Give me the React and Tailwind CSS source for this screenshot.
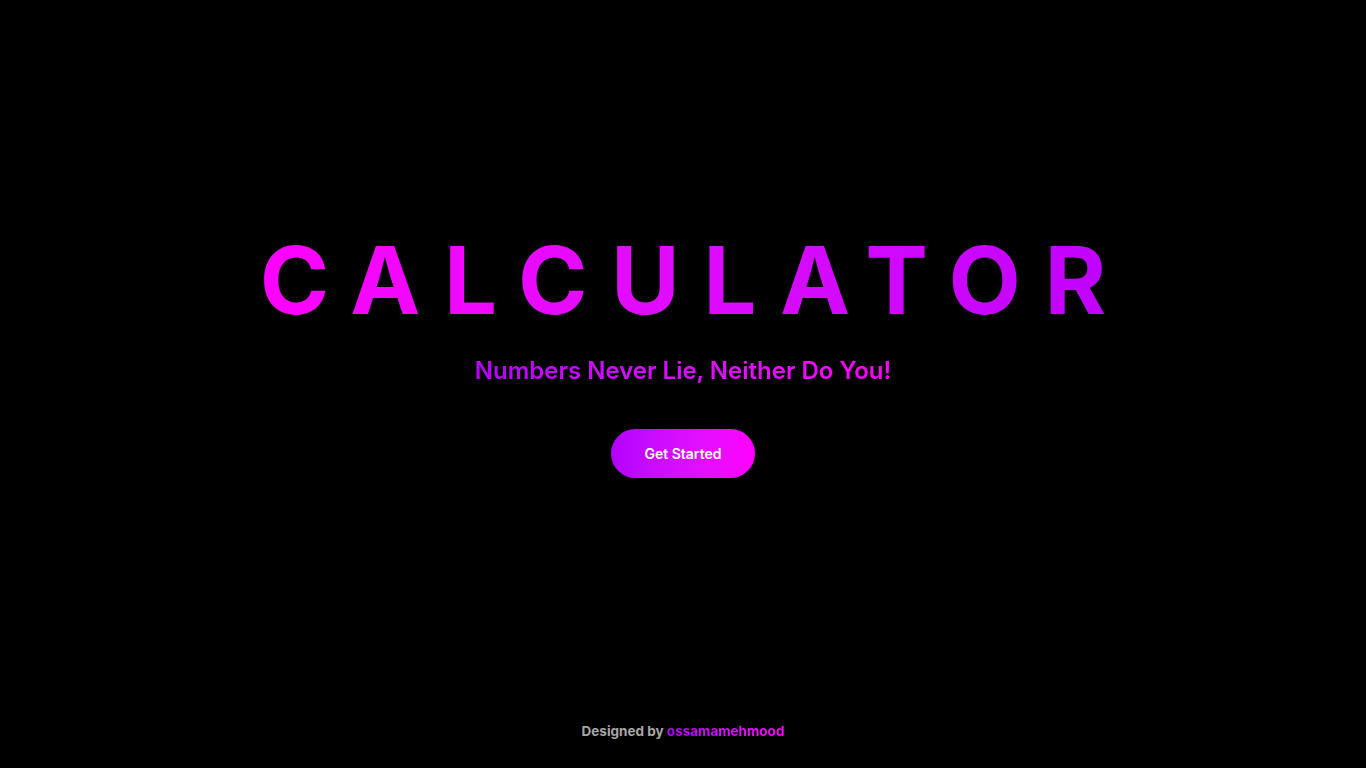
export default function App() {
  return (
    <div className="h-screen w-full bg-black flex flex-col font-['Inter','Noto_Sans',sans-serif] overflow-hidden">
      <main className="flex-1 flex flex-col items-center justify-center">
        <h1 className="text-[94px] leading-none font-bold tracking-[0.25em] pl-[0.25em] bg-gradient-to-r from-[#ff00ff] to-[#bf00ff] bg-clip-text text-transparent">
          CALCULATOR
        </h1>
        <p className="mt-[28px] text-[24px] leading-8 font-semibold bg-gradient-to-r from-[#b800ff] to-[#ff00ff] bg-clip-text text-transparent">
          Numbers Never Lie, Neither Do You!
        </p>
        <button className="mt-[42px] w-[144px] h-[49px] rounded-full bg-gradient-to-r from-[#b400ff] to-[#ff00ff] text-white text-[14px] font-semibold">
          Get Started
        </button>
      </main>
      <footer className="h-[58px] flex items-start justify-center pt-[11px] text-[13.5px] font-bold">
        <span className="text-[#a6a6a6]">Designed by&nbsp;</span>
        <span className="bg-gradient-to-r from-[#b400ff] to-[#ff00ff] bg-clip-text text-transparent">ossamamehmood</span>
      </footer>
    </div>
  );
}
